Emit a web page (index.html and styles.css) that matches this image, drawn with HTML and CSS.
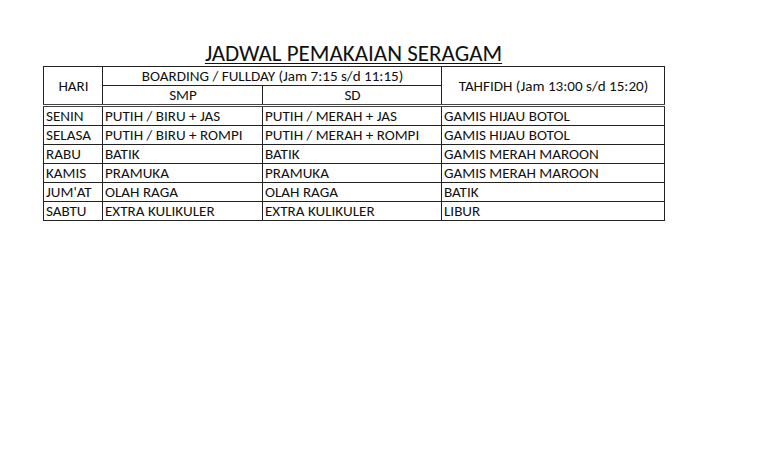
FILE: index.html
```html
<!DOCTYPE html>
<html>
<head>
<meta charset="utf-8">
<link rel="stylesheet" href="styles.css">
</head>
<body>
<div class="sheet">
  <div class="title"><span class="title-text">JADWAL PEMAKAIAN SERAGAM</span></div>
  <table class="grid">
    <colgroup>
      <col class="c-hari"><col class="c-smp"><col class="c-sd"><col class="c-tah">
    </colgroup>
    <thead>
      <tr>
        <th rowspan="2" class="head-last">HARI</th>
        <th colspan="2">BOARDING / FULLDAY (Jam 7:15 s/d 11:15)</th>
        <th rowspan="2" class="head-last">TAHFIDH (Jam 13:00 s/d 15:20)</th>
      </tr>
      <tr>
        <th class="head-last">SMP</th>
        <th class="head-last">SD</th>
      </tr>
    </thead>
    <tbody>
      <tr><td>SENIN</td><td>PUTIH / BIRU + JAS</td><td>PUTIH / MERAH + JAS</td><td>GAMIS HIJAU BOTOL</td></tr>
      <tr><td>SELASA</td><td>PUTIH / BIRU + ROMPI</td><td>PUTIH / MERAH + ROMPI</td><td>GAMIS HIJAU BOTOL</td></tr>
      <tr><td>RABU</td><td>BATIK</td><td>BATIK</td><td>GAMIS MERAH MAROON</td></tr>
      <tr><td>KAMIS</td><td>PRAMUKA</td><td>PRAMUKA</td><td>GAMIS MERAH MAROON</td></tr>
      <tr><td>JUM'AT</td><td>OLAH RAGA</td><td>OLAH RAGA</td><td>BATIK</td></tr>
      <tr><td>SABTU</td><td>EXTRA KULIKULER</td><td>EXTRA KULIKULER</td><td>LIBUR</td></tr>
    </tbody>
  </table>
</div>
</body>
</html>
```

FILE: styles.css
```css
html, body {
  margin: 0;
  padding: 0;
  background: #ffffff;
}

body {
  font-family: Calibri, Carlito, "Open Sans", "Liberation Sans", sans-serif;
  color: #111111;
}

.sheet {
  padding: 40px 0 0 43px;
  width: 621px;
}

.title {
  text-align: center;
  height: 26px;
  line-height: 26px;
}

.title-text {
  font-size: 23px;
  text-decoration: underline;
  text-underline-offset: 2px;
  text-decoration-thickness: 1px;
}

.grid {
  border-collapse: collapse;
  table-layout: fixed;
  width: 621px;
  font-size: 15.1px;
}

.c-hari { width: 59px; }
.c-smp { width: 160px; }
.c-sd { width: 179px; }
.c-tah { width: 223px; }

.grid th,
.grid td {
  border: 1px solid #222222;
  padding: 0 1px 0 2px;
  height: 18px;
  line-height: 18px;
  white-space: nowrap;
  overflow: hidden;
}

.grid th {
  font-weight: normal;
  text-align: center;
}

.grid th.head-last {
  border-bottom: 3px double #444444;
}

.grid td {
  text-align: left;
}
```
